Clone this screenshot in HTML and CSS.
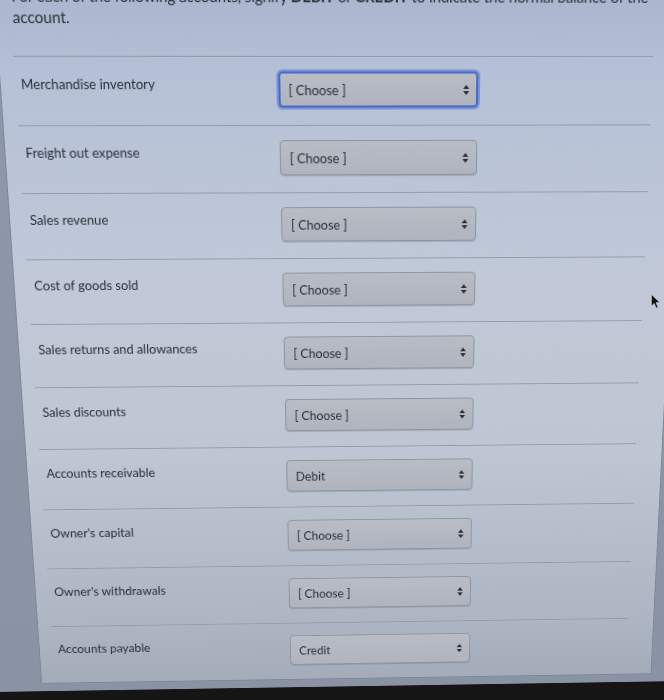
FILE: index.html
```html
<!DOCTYPE html>
<html lang="en">
<head>
<meta charset="utf-8">
<title>Normal balance quiz</title>
<link rel="stylesheet" href="styles.css">
</head>
<body>
<div class="scene">
  <div class="card">
    <p class="prompt"><span class="line">For each of the following accounts, signify <b>DEBIT</b> or <b>CREDIT</b> to indicate the normal balance of the</span><br>account.</p>
    <div class="rows">
      <div class="row"><div class="label">Merchandise inventory</div><div class="select focused"><span>[ Choose ]</span><svg class="arrows" viewBox="0 0 6 10"><path d="M3 0 L6 4 L0 4 Z M0 6 L6 6 L3 10 Z"/></svg></div></div>
      <div class="row"><div class="label">Freight out expense</div><div class="select"><span>[ Choose ]</span><svg class="arrows" viewBox="0 0 6 10"><path d="M3 0 L6 4 L0 4 Z M0 6 L6 6 L3 10 Z"/></svg></div></div>
      <div class="row"><div class="label">Sales revenue</div><div class="select"><span>[ Choose ]</span><svg class="arrows" viewBox="0 0 6 10"><path d="M3 0 L6 4 L0 4 Z M0 6 L6 6 L3 10 Z"/></svg></div></div>
      <div class="row"><div class="label">Cost of goods sold</div><div class="select"><span>[ Choose ]</span><svg class="arrows" viewBox="0 0 6 10"><path d="M3 0 L6 4 L0 4 Z M0 6 L6 6 L3 10 Z"/></svg></div></div>
      <div class="row"><div class="label">Sales returns and allowances</div><div class="select"><span>[ Choose ]</span><svg class="arrows" viewBox="0 0 6 10"><path d="M3 0 L6 4 L0 4 Z M0 6 L6 6 L3 10 Z"/></svg></div></div>
      <div class="row"><div class="label">Sales discounts</div><div class="select"><span>[ Choose ]</span><svg class="arrows" viewBox="0 0 6 10"><path d="M3 0 L6 4 L0 4 Z M0 6 L6 6 L3 10 Z"/></svg></div></div>
      <div class="row"><div class="label">Accounts receivable</div><div class="select"><span>Debit</span><svg class="arrows" viewBox="0 0 6 10"><path d="M3 0 L6 4 L0 4 Z M0 6 L6 6 L3 10 Z"/></svg></div></div>
      <div class="row"><div class="label">Owner's capital</div><div class="select"><span>[ Choose ]</span><svg class="arrows" viewBox="0 0 6 10"><path d="M3 0 L6 4 L0 4 Z M0 6 L6 6 L3 10 Z"/></svg></div></div>
      <div class="row"><div class="label">Owner's withdrawals</div><div class="select"><span>[ Choose ]</span><svg class="arrows" viewBox="0 0 6 10"><path d="M3 0 L6 4 L0 4 Z M0 6 L6 6 L3 10 Z"/></svg></div></div>
      <div class="row"><div class="label">Accounts payable</div><div class="select"><span>Credit</span><svg class="arrows" viewBox="0 0 6 10"><path d="M3 0 L6 4 L0 4 Z M0 6 L6 6 L3 10 Z"/></svg></div></div>
    </div>
  </div>
</div>
<svg class="cursor" viewBox="0 0 10 15"><path d="M0.5 0.5 L0.5 12 L3.2 9.4 L5.2 14 L7 13.2 L5 8.6 L8.8 8.6 Z"/></svg>
</body>
</html>
```
FILE: styles.css
```css
html, body {
  margin: 0;
  padding: 0;
  overflow: hidden;
  background: #8a92a1;
}

body {
  font-family: Lato, "Noto Sans", "Liberation Sans", sans-serif;
  color: #2a3038;
}

/* the photographed screen: flat layout, projected to match the camera angle */
.scene {
  width: 720px;
  height: 800px;
  margin: -20px 0 0 -60px;
  padding: 20px 0 0 60px;
  transform-origin: 81px 104px;
  transform: matrix3d(1.01221, -0.000348, 0, 0.000026, 0.06808, 1.0396, 0, 0.00018155, 0, 0, 1, 0, 0, 0, 0, 1);
  background: linear-gradient(180deg, #8f98a8 0, #8a93a3 757px, #151515 757px);
}

.card {
  width: 640px;
  padding: 0 28px 0 14px;
  border: 1px solid #7e8797;
  border-top: none;
  background: linear-gradient(180deg, #a9b5cd 0%, #b5c1d6 12%, #c1c9d8 40%, #bec6d3 65%, #aeb6c4 90%, #a4acba 100%);
}

.prompt {
  margin: -10px 0 0;
  padding-left: 2px;
  font-size: 15px;
  line-height: 20px;
  height: 40px;
}

.prompt .line {
  white-space: nowrap;
  letter-spacing: -0.12px;
}

.prompt b {
  font-weight: 700;
}

.rows {
  margin-top: 27px;
}

.row {
  display: flex;
  align-items: flex-start;
  height: 67px;
  box-sizing: border-box;
  border-top: 1px solid #939cab;
  padding-left: 6px;
}

.label {
  width: 256px;
  padding-top: 16px;
  font-size: 13.2px;
  line-height: 20px;
}

.select {
  margin-top: 14px;
  width: 201px;
  height: 35px;
  box-sizing: border-box;
  border: 1px solid #8e95a1;
  border-radius: 4px;
  background: linear-gradient(180deg, #b7bcc5, #afb4be);
  box-shadow: 0 1px 1px rgba(60, 70, 85, 0.22);
  display: flex;
  align-items: center;
  justify-content: space-between;
  padding: 0 8px 0 9px;
  font-size: 13px;
  color: #2a3038;
}

.select.focused {
  border: 2px solid #4a69c6;
  box-shadow: 0 0 0 2px #7b94d9;
  padding: 0 7px 0 8px;
}

.arrows {
  width: 6px;
  height: 10px;
  fill: #2a2f36;
}

.cursor {
  position: absolute;
  left: 651px;
  top: 294px;
  width: 10px;
  height: 15px;
  fill: #111;
  stroke: #d8dde6;
  stroke-width: 0.5;
}
```
